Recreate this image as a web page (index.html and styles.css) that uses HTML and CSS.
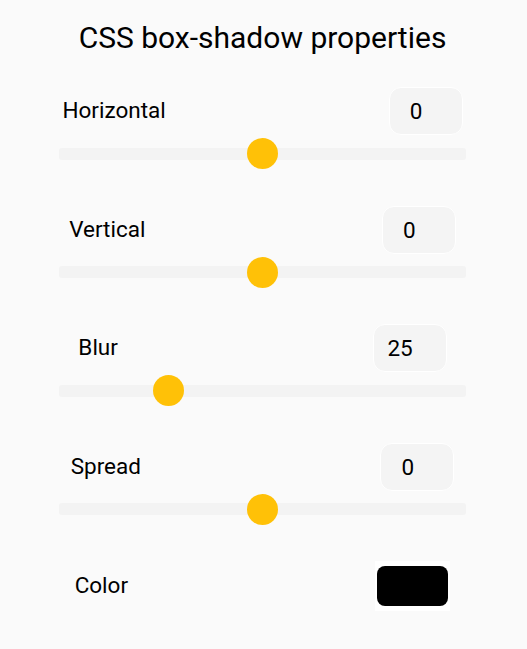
FILE: index.html
```html
<!DOCTYPE html>
<html lang="en">
<head>
<meta charset="utf-8">
<title>CSS box-shadow properties</title>
<link rel="stylesheet" href="styles.css">
</head>
<body>
<div class="app">
  <main class="panel">
    <h1 class="title">CSS box-shadow properties</h1>

    <section class="group">
      <div class="row">
        <label class="label" for="h">Horizontal</label>
        <input class="num" id="h" type="number" value="0">
      </div>
      <input class="range" type="range" min="-50" max="50" value="0">
    </section>

    <section class="group">
      <div class="row">
        <label class="label" for="v">Vertical</label>
        <input class="num" id="v" type="number" value="0">
      </div>
      <input class="range" type="range" min="-50" max="50" value="0">
    </section>

    <section class="group">
      <div class="row">
        <label class="label" for="b">Blur</label>
        <input class="num" id="b" type="number" value="25">
      </div>
      <input class="range" type="range" min="0" max="100" value="25">
    </section>

    <section class="group">
      <div class="row">
        <label class="label" for="s">Spread</label>
        <input class="num" id="s" type="number" value="0">
      </div>
      <input class="range" type="range" min="-50" max="50" value="0">
    </section>

    <section class="group">
      <div class="row row-color">
        <label class="label" for="c">Color</label>
        <input class="color" id="c" type="color" value="#000000">
      </div>
    </section>
  </main>
</div>
</body>
</html>
```

FILE: styles.css
```css
html, body {
  margin: 0;
  padding: 0;
  background: #fafafa;
}

.app {
  overflow: hidden;
  min-height: 649px;
  font-family: Roboto, "Liberation Sans", Arial, sans-serif;
  color: #000;
}

.panel {
  width: 407px;
  margin-left: 59px;
  display: flex;
  flex-direction: column;
}

.title {
  margin: 20px 0 32px;
  font-size: 30px;
  font-weight: 400;
  line-height: normal;
  text-align: center;
}

.group {
  display: flex;
  flex-direction: column;
  margin-bottom: 36.5px;
}

.row {
  width: 623px;
  margin-left: -108px;
  height: 48px;
  display: flex;
  align-items: center;
  justify-content: space-around;
}

.row-color {
  height: 50px;
}

.label {
  font-size: 22.5px;
  line-height: normal;
  margin-top: -1.5px;
}

.num {
  box-sizing: border-box;
  width: 74px;
  height: 48px;
  margin: 0;
  padding: 0 19px 0 0;
  border: 1px solid #ffffff;
  border-radius: 12px;
  background: #f4f4f4;
  font-family: Roboto, "Liberation Sans", Arial, sans-serif;
  font-size: 22.5px;
  color: #000;
  text-align: center;
  outline: none;
  -moz-appearance: textfield;
}

.num::-webkit-inner-spin-button,
.num::-webkit-outer-spin-button {
  -webkit-appearance: none;
  margin: 0;
}

.range {
  -webkit-appearance: none;
  appearance: none;
  display: block;
  width: 407px;
  height: 31px;
  margin: 3px 0 0;
  padding: 0;
  background: transparent;
  outline: none;
}

.range::-webkit-slider-runnable-track {
  height: 12px;
  border-radius: 3px;
  background: #f3f3f3;
}

.range::-webkit-slider-thumb {
  -webkit-appearance: none;
  appearance: none;
  width: 31px;
  height: 31px;
  margin-top: -9.5px;
  border: none;
  border-radius: 50%;
  background: #ffc107;
}

.color {
  -webkit-appearance: none;
  appearance: none;
  box-sizing: border-box;
  width: 75px;
  height: 50px;
  margin: 0;
  padding: 5px 2px;
  border: none;
  background: #ffffff;
}

.color::-webkit-color-swatch-wrapper {
  padding: 0;
}

.color::-webkit-color-swatch {
  border: none;
  border-radius: 8px;
}
```
